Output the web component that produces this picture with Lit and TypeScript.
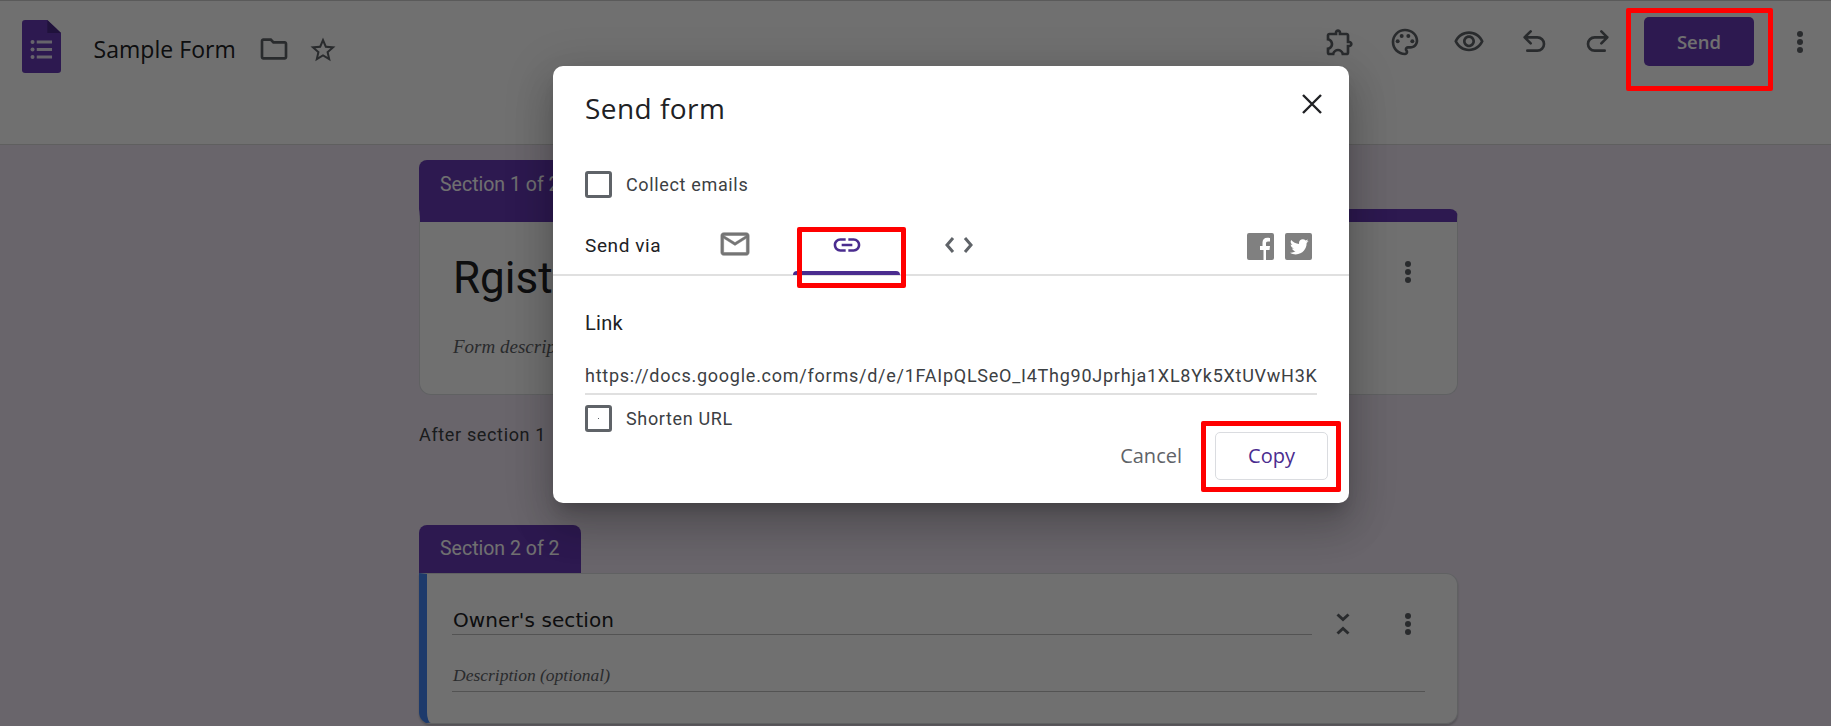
import { LitElement, html, css, svg } from "lit";
import { customElement } from "lit/decorators.js";

const kebab = html`<svg class="kebab" viewBox="0 0 8 24"><circle cx="4" cy="4" r="3"/><circle cx="4" cy="12" r="3"/><circle cx="4" cy="20" r="3"/></svg>`;

const ICONS = {
  ext: svg`<path d="M10.5 4.5c.28 0 .5.22.5.5v2h6v6h2c.28 0 .5.22.5.5s-.22.5-.5.5h-2v6h-2.12c-.68-1.75-2.39-3-4.38-3s-3.7 1.25-4.38 3H4v-2.12c1.75-.68 3-2.39 3-4.38 0-1.99-1.24-3.7-2.99-4.38L4 7h6V5c0-.28.22-.5.5-.5m0-2C9.12 2.5 8 3.62 8 5H4c-1.1 0-1.99.9-1.99 2v3.8h.29c1.49 0 2.7 1.21 2.7 2.7s-1.21 2.7-2.7 2.7H2V20c0 1.1.9 2 2 2h3.8v-.3c0-1.49 1.21-2.7 2.7-2.7s2.7 1.21 2.7 2.7v.3H17c1.1 0 2-.9 2-2v-4c1.38 0 2.5-1.12 2.5-2.5S20.38 11 19 11V7c0-1.1-.9-2-2-2h-4c0-1.38-1.12-2.5-2.5-2.5z"/>`,
  palette: svg`<path d="M12 22C6.49 22 2 17.51 2 12S6.49 2 12 2s10 4.04 10 9c0 3.31-2.69 6-6 6h-1.77c-.28 0-.5.22-.5.5 0 .12.05.23.13.33.41.47.64 1.06.64 1.67 0 1.38-1.12 2.5-2.5 2.5zm0-18c-4.41 0-8 3.59-8 8s3.59 8 8 8c.28 0 .5-.22.5-.5 0-.16-.08-.28-.14-.35-.41-.46-.63-1.05-.63-1.65 0-1.38 1.12-2.5 2.5-2.5H16c2.21 0 4-1.79 4-4 0-3.86-3.59-7-8-7z"/><circle cx="6.5" cy="11.5" r="1.5"/><circle cx="9.5" cy="7.5" r="1.5"/><circle cx="14.5" cy="7.5" r="1.5"/><circle cx="17.5" cy="11.5" r="1.5"/>`,
  eye: svg`<path d="M12 6c3.79 0 7.17 2.13 8.82 5.5C19.17 14.87 15.79 17 12 17s-7.17-2.13-8.82-5.5C4.83 8.13 8.21 6 12 6m0-2C7 4 2.73 7.11 1 11.5 2.73 15.89 7 19 12 19s9.27-3.11 11-7.5C21.27 7.11 17 4 12 4zm0 5c1.38 0 2.5 1.12 2.5 2.5S13.38 14 12 14s-2.5-1.12-2.5-2.5S10.62 9 12 9m0-2c-2.48 0-4.5 2.02-4.5 4.5S9.52 16 12 16s4.5-2.02 4.5-4.5S14.48 7 12 7z"/>`,
  undo: svg`<path class="line" d="M9.5 4 L5 8.500 L9.500 13 M5 8.500 H14.500 a5 5 0 0 1 0 10 H7"/>`,
  redo: svg`<path class="line" d="M14.500 4 L19 8.500 L14.500 13 M19 8.500 H9.500 a5 5 0 0 0 0 10 H17"/>`,
};

@customElement("app-root")
export class AppRoot extends LitElement {
  static styles = css`
    :host { display: block; position: relative; height: 726px; overflow: hidden; background: #eee6f3; font-family: Roboto, "Liberation Sans", sans-serif; color: #202124; }
    svg { display: block; flex: none; fill: #5f6368; }
    svg .line { fill: none; stroke: #5f6368; stroke-width: 2; stroke-linecap: round; stroke-linejoin: round; }

    header { box-sizing: border-box; height: 145px; background: #fff; border-top: 1px solid #ccc; border-bottom: 1px solid #d8d8d8; padding: 16px 27px 0 22px; display: flex; align-items: flex-start; }
    .logo { width: 39px; height: 53px; margin-top: 3px; }
    .doc-title { font-family: "Open Sans", sans-serif; font-size: 23px; line-height: 32px; margin: 16px 0 0 32.500px; color: #202124; letter-spacing: .05px; }
    .folder { width: 32px; height: 32px; margin: 16px 0 0 22px; }
    .star { width: 30px; height: 30px; margin: 18px 0 0 18px; }
    .spacer { flex: 1; }
    .tool { width: 64.500px; height: 49px; display: flex; align-items: center; justify-content: center; }
    .tool svg { width: 32px; height: 32px; }
    .send-btn { width: 110px; height: 49px; margin: 0 0 0 13.750px; background: #673ab7; color: #fff; border-radius: 5px; display: flex; align-items: center; justify-content: center; font-family: "Open Sans", sans-serif; font-weight: 600; font-size: 18.500px; }
    .kebab { width: 8px; height: 24px; }
    .hk { height: 49px; display: flex; align-items: center; margin-left: 42px; }

    main { width: 1039px; margin-left: 419px; padding-top: 15px; }
    .tab { box-sizing: border-box; width: 162px; background: #673ab7; color: #fff; border-radius: 8px 8px 0 0; padding-left: 21px; font-size: 19.500px; }
    .tab1 { height: 49px; padding-top: 13px; }
    .tab2 { height: 48px; padding-top: 12px; }
    .card { box-sizing: border-box; background: #fff; border: 1px solid #dadce0; }
    .card1 { height: 186px; border-top: 13px solid #673ab7; border-radius: 0 8px 12px 12px; padding: 0 34px 0 33px; display: flex; justify-content: space-between; }
    .rgist { font-size: 44px; line-height: 50px; margin-top: 31px; color: #202124; }
    .fdesc { font-family: "Liberation Serif", serif; font-style: italic; font-size: 19px; margin-top: 33px; color: #5f6368; }
    .card1 .kebab { margin-top: 38px; margin-right: 11.500px; }
    .after { font-size: 18px; line-height: 24px; margin-top: 28px; color: #3c4043; height: 102px; letter-spacing: .65px; }
    .card2 { height: 151px; border-left: 8px solid #4285f4; border-radius: 0 12px 12px 12px; padding-left: 25px; box-shadow: 0 2px 2px rgba(0,0,0,.2); display: flex; }
    .fields { width: 973px; flex: none; }
    .owner { width: 859px; font-family: "DejaVu Sans", sans-serif; font-size: 20px; line-height: 24px; padding: 34px 0 2px 1px; border-bottom: 1px solid #bdbdbd; color: #202124; letter-spacing: .1px; }
    .odesc { font-family: "Liberation Serif", serif; font-style: italic; font-size: 17.500px; line-height: 24px; padding: 28px 0 4px 1px; border-bottom: 1px solid #bdbdbd; color: #5f6368; }
    .collapse { width: 14px; height: 24px; margin: 38px 0 0 -89.500px; fill: none; stroke: #5f6368; stroke-width: 3; }
    .card2 .kebab { margin: 38px 0 0 54px; }

    .scrim { position: absolute; inset: 0; background: rgba(0,0,0,.56); }
    .modal { position: absolute; left: 553px; top: 66px; width: 796px; height: 437px; box-sizing: border-box; background: #fff; border-radius: 10px; box-shadow: 0 11px 15px -7px rgba(0,0,0,.2), 0 24px 38px 3px rgba(0,0,0,.14), 0 9px 46px 8px rgba(0,0,0,.12); display: flex; flex-direction: column; }
    .m-head { display: flex; justify-content: space-between; padding: 25px 27px 0 32px; height: 105px; box-sizing: border-box; }
    .m-title { font-family: "Open Sans", sans-serif; font-size: 28px; line-height: 34px; color: #202124; letter-spacing: .45px; }
    .close { width: 20px; height: 20px; margin-top: 3px; fill: none; stroke: #202124; stroke-width: 2.400; }
    .chk { display: flex; align-items: center; padding-left: 32px; font-size: 18px; letter-spacing: .65px; color: #3c4043; }
    .box { box-sizing: border-box; width: 27px; height: 27px; border: 3px solid #5f6368; border-radius: 3px; margin-right: 14px; display: flex; align-items: center; justify-content: center; }
    .dot { width: 1px; height: 1px; background: #5f6368; }
    .via { box-sizing: border-box; height: 78px; padding: 0 37px 0 32px; border-bottom: 2px solid #e0e0e0; display: flex; align-items: flex-start; }
    .via-label { width: 76px; flex: none; font-size: 19px; letter-spacing: .6px; margin-top: 36px; line-height: 24px; color: #202124; white-space: nowrap; }
    .mail { width: 34px; height: 34px; margin: 29px 0 0 57px; fill: #757575; stroke: #757575; stroke-width: .35; }
    .tablink { width: 107px; height: 76px; margin-left: 41px; display: flex; flex-direction: column; align-items: center; position: relative; }
    .tablink svg { width: 32px; height: 32px; margin-top: 31px; fill: #4a2c8f; }
    .bar { position: absolute; left: 0; right: 0; bottom: -1px; height: 4px; background: #4a2c8f; border-radius: 4px 4px 0 0; }
    .code { width: 28px; height: 18px; margin: 37.500px 0 0 45px; fill: none; stroke: #5f6368; stroke-width: 3; }
    .social { margin-left: auto; display: flex; gap: 11px; margin-top: 35px; }
    .social svg { width: 27px; height: 27px; fill: #808080; }
    .link-label { padding: 34px 0 0 32px; font-size: 20px; line-height: 26px; letter-spacing: .3px; color: #202124; }
    .url { box-sizing: border-box; margin: 22px 32px 0 32px; height: 37px; line-height: 34px; border-bottom: 2px solid #e0e0e0; font-size: 18px; letter-spacing: .75px; white-space: nowrap; overflow: hidden; color: #3c4043; padding-top: 1px; }
    .short { margin-top: 10px; }
    .actions { display: flex; justify-content: flex-end; align-items: center; padding-right: 21px; }
    .cancel { font-family: "Open Sans", sans-serif; font-size: 20px; font-weight: 500; color: #5f6368; margin-right: 33px; padding-bottom: 2px; }
    .copy { box-sizing: border-box; width: 113px; height: 48px; padding-bottom: 2px; border: 1px solid #dadce0; border-radius: 5px; display: flex; align-items: center; justify-content: center; font-family: "Open Sans", sans-serif; font-size: 20px; font-weight: 500; color: #4a2c8f; }

    .mark { position: absolute; box-sizing: border-box; border: 5px solid #f00; border-radius: 2px; }
    .m1 { left: 1626px; top: 8px; width: 147px; height: 83px; }
    .m2 { left: 797px; top: 227px; width: 109px; height: 61px; }
    .m3 { left: 1201px; top: 421px; width: 140px; height: 71px; }
  `;

  render() {
    return html`
      <header>
        <svg class="logo" viewBox="0 0 37 53" preserveAspectRatio="none">
          <path fill="#673ab7" d="M3 0H24L37 13V50a3 3 0 0 1-3 3H3a3 3 0 0 1-3-3V3a3 3 0 0 1 3-3z"/>
          <path fill="#4a2a88" d="M24 0L37 13H24z"/>
          <g fill="#fff" opacity=".85">
            <circle cx="10" cy="22" r="1.900"/><circle cx="10" cy="29.500" r="1.900"/><circle cx="10" cy="37" r="1.900"/>
            <rect x="14" y="20.500" width="14.500" height="3"/><rect x="14" y="28" width="14.500" height="3"/><rect x="14" y="35.500" width="14.500" height="3"/>
          </g>
        </svg>
        <div class="doc-title">Sample Form</div>
        <svg class="folder" viewBox="0 0 24 24"><path d="M20 6h-8l-2-2H4c-1.100 0-1.990.9-1.990 2L2 18c0 1.100.9 2 2 2h16c1.100 0 2-.9 2-2V8c0-1.100-.9-2-2-2zm0 12H4V6h5.170l2 2H20v10z"/></svg>
        <svg class="star" viewBox="0 0 24 24"><path d="M22 9.240l-7.190-.62L12 2 9.190 8.630 2 9.240l5.460 4.730L5.820 21 12 17.270 18.180 21l-1.630-7.030L22 9.240zM12 15.400l-3.760 2.270 1-4.280-3.320-2.880 4.380-.38L12 6.100l1.710 4.040 4.380.38-3.320 2.880 1 4.280L12 15.400z"/></svg>
        <div class="spacer"></div>
        <div class="tool"><svg viewBox="0 0 24 24">${ICONS.ext}</svg></div>
        <div class="tool"><svg viewBox="0 0 24 24">${ICONS.palette}</svg></div>
        <div class="tool"><svg viewBox="0 0 24 24">${ICONS.eye}</svg></div>
        <div class="tool"><svg viewBox="0 0 24 24">${ICONS.undo}</svg></div>
        <div class="tool"><svg viewBox="0 0 24 24">${ICONS.redo}</svg></div>
        <div class="send-btn">Send</div>
        <div class="hk">${kebab}</div>
      </header>

      <main>
        <div class="tab tab1">Section 1 of 2</div>
        <div class="card card1">
          <div>
            <div class="rgist">Rgist</div>
            <div class="fdesc">Form descrip</div>
          </div>
          ${kebab}
        </div>
        <div class="after">After section 1</div>
        <div class="tab tab2">Section 2 of 2</div>
        <div class="card card2">
          <div class="fields">
            <div class="owner">Owner's section</div>
            <div class="odesc">Description (optional)</div>
          </div>
          <svg class="collapse" viewBox="0 0 14 24"><path d="M1.500 2.500L7 7.500L12.500 2.500M1.500 21.500L7 16.500L12.500 21.500"/></svg>
          ${kebab}
        </div>
      </main>

      <div class="scrim"></div>

      <section class="modal">
        <div class="m-head">
          <div class="m-title">Send form</div>
          <svg class="close" viewBox="0 0 20 20"><path d="M1 1L19 19M19 1L1 19"/></svg>
        </div>
        <div class="chk"><span class="box"></span>Collect emails</div>
        <div class="via">
          <div class="via-label">Send via</div>
          <svg class="mail" viewBox="0 0 24 24"><path d="M20 4H4c-1.100 0-1.990.9-1.990 2L2 18c0 1.100.9 2 2 2h16c1.100 0 2-.9 2-2V6c0-1.100-.9-2-2-2zm0 14H4V8l8 5 8-5v10zm-8-7L4 6h16l-8 5z"/></svg>
          <div class="tablink">
            <svg viewBox="0 0 24 24"><path d="M3.900 12c0-1.710 1.390-3.100 3.100-3.100h4V7H7c-2.760 0-5 2.240-5 5s2.240 5 5 5h4v-1.900H7c-1.710 0-3.100-1.390-3.100-3.100zM8 13h8v-2H8v2zm9-6h-4v1.900h4c1.710 0 3.100 1.390 3.100 3.100s-1.390 3.100-3.100 3.100h-4V17h4c2.760 0 5-2.240 5-5s-2.240-5-5-5z"/></svg>
            <div class="bar"></div>
          </div>
          <svg class="code" viewBox="0 0 28 18"><path d="M8 2L2 9L8 16M20 2L26 9L20 16"/></svg>
          <div class="social">
            <svg viewBox="0 0 27 27"><path fill-rule="evenodd" d="M2 0H25a2 2 0 0 1 2 2V25a2 2 0 0 1-2 2H19V17h3.500l.5-4H19V10.500c0-1.200.4-2 2-2h2V5c-.5-.1-1.600-.2-2.800-.2-2.800 0-4.700 1.700-4.700 4.800V13H13v4h3.500V27H2a2 2 0 0 1-2-2V2a2 2 0 0 1 2-2z"/></svg>
            <svg viewBox="0 0 27 27"><path fill-rule="evenodd" d="M2 0H25a2 2 0 0 1 2 2V25a2 2 0 0 1-2 2H2a2 2 0 0 1-2-2V2a2 2 0 0 1 2-2zM23.500 8c-.7.3-1.400.5-2.200.6.800-.5 1.400-1.200 1.700-2.100-.7.400-1.600.8-2.400.9-.7-.8-1.700-1.200-2.800-1.200-2.100 0-3.800 1.700-3.800 3.800 0 .3 0 .6.100.9-3.200-.2-6-1.700-7.900-4-.3.600-.5 1.200-.5 1.900 0 1.300.7 2.500 1.700 3.200-.6 0-1.200-.2-1.700-.4v0c0 1.800 1.300 3.400 3 3.700-.6.200-1.100.2-1.700.1.500 1.500 1.900 2.600 3.500 2.600-1.600 1.300-3.400 1.900-5.500 1.700 1.700 1.100 3.700 1.700 5.800 1.700 7 0 10.800-5.800 10.800-10.800v-.5c.8-.5 1.400-1.200 1.900-2z"/></svg>
          </div>
        </div>
        <div class="link-label">Link</div>
        <div class="url">https://docs.google.com/forms/d/e/1FAIpQLSeO_I4Thg90Jprhja1XL8Yk5XtUVwH3K</div>
        <div class="chk short"><span class="box"><span class="dot"></span></span>Shorten URL</div>
        <div class="actions">
          <div class="cancel">Cancel</div>
          <div class="copy">Copy</div>
        </div>
      </section>

      <div class="mark m1"></div>
      <div class="mark m2"></div>
      <div class="mark m3"></div>
    `;
  }
}
